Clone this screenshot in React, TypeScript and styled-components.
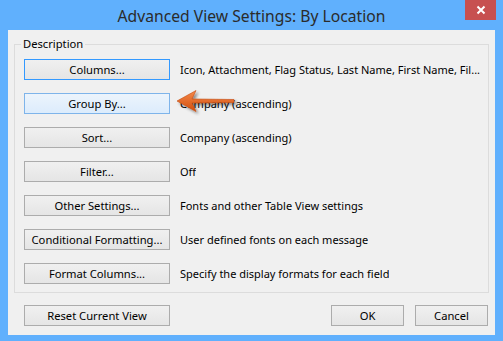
import React from 'react';
import styled, { createGlobalStyle, css } from 'styled-components';

const GlobalStyle = createGlobalStyle`
  html, body {
    margin: 0;
    padding: 0;
    background: #62b1fd;
  }
  body {
    font-family: 'Noto Sans', 'Open Sans', Arial, sans-serif;
  }
`;

const Window = styled.div`
  width: 503px;
  height: 341px;
  background: #60b0fd;
  display: flex;
  flex-direction: column;
  box-sizing: border-box;
  position: relative;
`;

const TitleBar = styled.div`
  height: 31px;
  display: flex;
  align-items: center;
  justify-content: center;
  position: relative;
`;

const Title = styled.div`
  font-size: 15.7px;
  color: #2b2b2b;
  padding-top: 1px;
`;

const CloseButton = styled.div`
  position: absolute;
  top: 0;
  right: 7px;
  width: 31px;
  height: 20px;
  background: #c75050;
  color: #fff;
  display: flex;
  align-items: center;
  justify-content: center;
`;

const Client = styled.div`
  flex: 1;
  margin: 0 8px 6px 8px;
  background: #f0f0f0;
  display: flex;
  flex-direction: column;
  padding: 7px 6px 9px 6px;
  box-sizing: border-box;
`;

const GroupBox = styled.fieldset`
  margin: 0;
  border: 1px solid #dcdcdc;
  padding: 8px 0 8px 9px;
  display: flex;
  flex-direction: column;
  gap: 13px;
  min-width: 0;
`;

const Legend = styled.legend`
  font-size: 11.2px;
  color: #000;
  padding: 0 2px;
  margin-left: -3px;
  line-height: 14px;
`;

const Row = styled.div`
  display: flex;
  align-items: center;
  gap: 10px;
  position: relative;
  min-width: 0;
`;

const Button = styled.div<{ $state?: 'default' | 'hover'; $width?: number }>`
  width: ${(p) => p.$width ?? 146}px;
  height: 21px;
  box-sizing: border-box;
  border: 1px solid #acacac;
  background: linear-gradient(#f0f0f0, #e5e5e5);
  font-size: 11.2px;
  color: #000;
  display: flex;
  align-items: center;
  justify-content: center;
  flex-shrink: 0;
  white-space: nowrap;
  ${(p) =>
    p.$state === 'default' &&
    css`
      border-color: #3399ff;
    `}
  ${(p) =>
    p.$state === 'hover' &&
    css`
      border-color: #7eb4ea;
      background: linear-gradient(#ecf4fc, #dcecfc);
    `}
`;

const Desc = styled.div`
  font-size: 11px;
  color: #000;
  white-space: nowrap;
  overflow: hidden;
`;

const Arrow = styled.svg`
  position: absolute;
  left: 150px;
  top: -3px;
`;

const Footer = styled.div`
  display: flex;
  align-items: center;
  margin-top: 12px;
  padding: 0 1px 0 10px;
`;

const Spacer = styled.div`
  flex: 1;
`;

const FooterButtons = styled.div`
  display: flex;
  gap: 11px;
`;

const rows: { label: string; desc: string; state?: 'default' | 'hover' }[] = [
  { label: 'Columns...', desc: 'Icon, Attachment, Flag Status, Last Name, First Name, Fil...', state: 'default' },
  { label: 'Group By...', desc: 'Company (ascending)', state: 'hover' },
  { label: 'Sort...', desc: 'Company (ascending)' },
  { label: 'Filter...', desc: 'Off' },
  { label: 'Other Settings...', desc: 'Fonts and other Table View settings' },
  { label: 'Conditional Formatting...', desc: 'User defined fonts on each message' },
  { label: 'Format Columns...', desc: 'Specify the display formats for each field' },
];

function OrangeArrow() {
  return (
    <Arrow width="66" height="26" viewBox="0 0 66 26">
      <defs>
        <linearGradient id="ag" x1="0" y1="0" x2="0" y2="1">
          <stop offset="0" stopColor="#f5894a" />
          <stop offset="1" stopColor="#d24f0e" />
        </linearGradient>
        <filter id="sh" x="-20%" y="-40%" width="150%" height="200%">
          <feDropShadow dx="2" dy="2" stdDeviation="1.5" floodColor="#000" floodOpacity="0.45" />
        </filter>
      </defs>
      <path
        d="M3 11 L22 0.5 L18 9 L60 9.5 L60 12.5 L18 13 L22 21.5 Z"
        fill="url(#ag)"
        stroke="#c4480c"
        strokeWidth="0.6"
        filter="url(#sh)"
      />
    </Arrow>
  );
}

export default function App() {
  return (
    <>
      <GlobalStyle />
      <Window>
        <TitleBar>
          <Title>Advanced View Settings: By Location</Title>
          <CloseButton>
            <svg width="10" height="10" viewBox="0 0 10 10">
              <path d="M1.5 1.5 L8.5 8.5 M8.5 1.5 L1.5 8.5" stroke="#fff" strokeWidth="2" />
            </svg>
          </CloseButton>
        </TitleBar>
        <Client>
          <GroupBox>
            <Legend>Description</Legend>
            {rows.map((r) => (
              <Row key={r.label}>
                <Button $state={r.state}>{r.label}</Button>
                <Desc>{r.desc}</Desc>
                {r.state === 'hover' && <OrangeArrow />}
              </Row>
            ))}
          </GroupBox>
          <Footer>
            <Button>Reset Current View</Button>
            <Spacer />
            <FooterButtons>
              <Button $width={73}>OK</Button>
              <Button $width={73}>Cancel</Button>
            </FooterButtons>
          </Footer>
        </Client>
      </Window>
    </>
  );
}
